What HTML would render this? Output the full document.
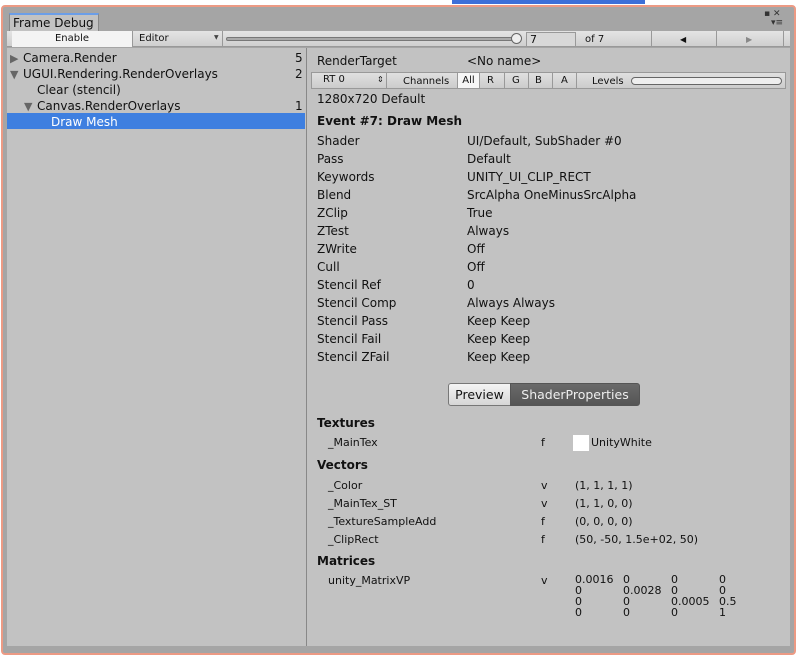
<!DOCTYPE html>
<html><head><style>
*{margin:0;padding:0;box-sizing:border-box}
body{width:797px;height:655px;background:#fff;font-family:"DejaVu Sans",sans-serif;font-size:11px;color:#111;position:relative;overflow:hidden}
.a{position:absolute;white-space:nowrap}
.win{position:absolute;left:1px;top:5px;width:795px;height:650px;border:2px solid #ec9a84;border-radius:4px;background:#a5a5a5}
.b{font-weight:bold}
.tri{color:#666;font-size:11px;display:inline-block;width:13px}
</style></head><body>
<div class="a" style="left:452px;top:0;width:193px;height:4px;background:#3c6fd8"></div>
<div class="win"></div>
<div class="a" style="left:9px;top:13px;width:90px;height:19px;background:#c2c2c2;border-top:2px solid #6b9ee8;border-left:1px solid #888;border-right:1px solid #888;padding:1px 0 0 3px;font-size:12px">Frame Debug</div>
<div class="a" style="left:764px;top:9px;font-size:9px;color:#333">▪ ✕</div>
<div class="a" style="left:771px;top:18px;font-size:9px;color:#333">▾≡</div>
<div class="a" style="left:7px;top:31px;width:783px;height:16px;background:linear-gradient(#e4e4e4,#cfcfcf);border-bottom:1px solid #999"></div>
<div class="a" style="left:12px;top:31px;width:121px;height:16px;background:#f4f4f4;border-right:1px solid #999;text-align:center;font-size:10px;line-height:16px">Enable</div>
<div class="a" style="left:139px;top:31px;font-size:10px;line-height:16px">Editor</div>
<div class="a" style="left:214px;top:31px;font-size:6px;line-height:14px;color:#444">▼</div>
<div class="a" style="left:222px;top:31px;width:1px;height:16px;background:#999"></div>
<div class="a" style="left:226px;top:37px;width:290px;height:4px;background:#aaa;border:1px solid #777;border-radius:2px"></div>
<div class="a" style="left:511px;top:33px;width:11px;height:11px;background:#eee;border:1px solid #666;border-radius:50%"></div>
<div class="a" style="left:526px;top:32px;width:50px;height:15px;background:#d8d8d8;border:1px solid #999;padding-left:3px;font-size:11px;line-height:13px">7</div>
<div class="a" style="left:585px;top:31px;font-size:10px;line-height:17px">of 7</div>
<div class="a" style="left:651px;top:31px;width:1px;height:16px;background:#999"></div>
<div class="a" style="left:716px;top:31px;width:1px;height:16px;background:#999"></div>
<div class="a" style="left:783px;top:31px;width:1px;height:16px;background:#999"></div>
<div class="a" style="left:680px;top:31px;font-size:8px;line-height:17px">◀</div>
<div class="a" style="left:746px;top:31px;font-size:8px;line-height:17px;color:#888">▶</div>
<div class="a" style="left:7px;top:48px;width:299px;height:598px;background:#c2c2c2"></div>
<div class="a" style="left:306px;top:48px;width:1px;height:598px;background:#888"></div>
<div class="a" style="left:307px;top:48px;width:483px;height:598px;background:#c2c2c2"></div>
<div class="a" style="left:7px;top:113px;width:298px;height:16px;background:#3e7fe0"></div>
<div class="a" style="left:10px;top:50px;font-size:12px;line-height:16px"><span class="tri">▶</span>Camera.Render</div>
<div class="a" style="left:10px;top:66px;font-size:12px;line-height:16px"><span class="tri">▼</span>UGUI.Rendering.RenderOverlays</div>
<div class="a" style="left:37px;top:82px;font-size:12px;line-height:16px">Clear (stencil)</div>
<div class="a" style="left:24px;top:98px;font-size:12px;line-height:16px"><span class="tri">▼</span>Canvas.RenderOverlays</div>
<div class="a" style="left:51px;top:114px;font-size:12px;line-height:16px;color:#fff">Draw Mesh</div>
<div class="a" style="left:295px;top:50px;font-size:12px;line-height:16px">5</div>
<div class="a" style="left:295px;top:66px;font-size:12px;line-height:16px">2</div>
<div class="a" style="left:295px;top:98px;font-size:12px;line-height:16px">1</div>
<div class="a" style="left:317px;top:53px;font-size:12px;line-height:16px">RenderTarget</div>
<div class="a" style="left:467px;top:53px;font-size:12px;line-height:16px">&lt;No name&gt;</div>
<div class="a" style="left:311px;top:72px;width:475px;height:17px;background:linear-gradient(#e0e0e0,#cccccc);border:1px solid #999"></div>
<div class="a" style="left:317px;top:72px;width:70px;height:16px;border-right:1px solid #999;font-size:10px;line-height:16px;padding-left:6px">RT 0<span style="position:absolute;left:60px;font-size:8px">⇕</span></div>
<div class="a" style="left:403px;top:74px;font-size:10px;line-height:16px">Channels</div>
<div class="a" style="left:457px;top:72px;width:23px;height:17px;background:#f6f6f6;border:1px solid #999;font-size:10px;line-height:15px;text-align:center">All</div>
<div class="a" style="left:487px;top:72px;font-size:10px;line-height:17px">R</div>
<div class="a" style="left:504px;top:72px;width:1px;height:16px;background:#999"></div>
<div class="a" style="left:512px;top:72px;font-size:10px;line-height:17px">G</div>
<div class="a" style="left:528px;top:72px;width:1px;height:16px;background:#999"></div>
<div class="a" style="left:535px;top:72px;font-size:10px;line-height:17px">B</div>
<div class="a" style="left:552px;top:72px;width:1px;height:16px;background:#999"></div>
<div class="a" style="left:561px;top:72px;font-size:10px;line-height:17px">A</div>
<div class="a" style="left:576px;top:72px;width:1px;height:16px;background:#999"></div>
<div class="a" style="left:592px;top:74px;font-size:10px;line-height:16px">Levels</div>
<div class="a" style="left:631px;top:77px;width:151px;height:8px;background:#eee;border:1px solid #666;border-radius:4px"></div>
<div class="a" style="left:317px;top:91px;font-size:12px;line-height:16px">1280x720 Default</div>
<div class="a b" style="left:317px;top:113px;font-size:12px;line-height:16px">Event #7: Draw Mesh</div>
<div class="a" style="left:317px;top:132px;font-size:12px;line-height:18px">Shader<br>Pass<br>Keywords<br>Blend<br>ZClip<br>ZTest<br>ZWrite<br>Cull<br>Stencil Ref<br>Stencil Comp<br>Stencil Pass<br>Stencil Fail<br>Stencil ZFail</div>
<div class="a" style="left:467px;top:132px;font-size:12px;line-height:18px">UI/Default, SubShader #0<br>Default<br>UNITY_UI_CLIP_RECT<br>SrcAlpha OneMinusSrcAlpha<br>True<br>Always<br>Off<br>Off<br>0<br>Always Always<br>Keep Keep<br>Keep Keep<br>Keep Keep</div>
<div class="a" style="left:448px;top:383px;width:63px;height:23px;background:linear-gradient(#f4f4f4,#d6d6d6);border:1px solid #777;border-radius:3px 0 0 3px;font-size:12.5px;line-height:21px;text-align:center">Preview</div>
<div class="a" style="left:510px;top:383px;width:130px;height:23px;background:linear-gradient(#6a6a6a,#555);border:1px solid #555;border-radius:0 3px 3px 0;font-size:12.5px;line-height:21px;text-align:center;color:#eee">ShaderProperties</div>
<div class="a b" style="left:317px;top:415px;font-size:12px;line-height:16px">Textures</div>
<div class="a" style="left:328px;top:436px;font-size:11px;line-height:14px">_MainTex</div>
<div class="a" style="left:541px;top:436px;font-size:11px;line-height:14px">f</div>
<div class="a" style="left:573px;top:435px;width:16px;height:16px;background:#fff"></div>
<div class="a" style="left:591px;top:436px;font-size:11px;line-height:14px">UnityWhite</div>
<div class="a b" style="left:317px;top:457px;font-size:12px;line-height:16px">Vectors</div>
<div class="a" style="left:328px;top:477px;font-size:11px;line-height:18px">_Color<br>_MainTex_ST<br>_TextureSampleAdd<br>_ClipRect</div>
<div class="a" style="left:541px;top:477px;font-size:11px;line-height:18px">v<br>v<br>f<br>f</div>
<div class="a" style="left:575px;top:477px;font-size:11px;line-height:18px">(1, 1, 1, 1)<br>(1, 1, 0, 0)<br>(0, 0, 0, 0)<br>(50, -50, 1.5e+02, 50)</div>
<div class="a b" style="left:317px;top:553px;font-size:12px;line-height:16px">Matrices</div>
<div class="a" style="left:328px;top:574px;font-size:11px;line-height:14px">unity_MatrixVP</div>
<div class="a" style="left:541px;top:574px;font-size:11px;line-height:14px">v</div>
<div class="a" style="left:575px;top:574px;font-size:11px;line-height:11px">0.0016<br>0<br>0<br>0</div>
<div class="a" style="left:623px;top:574px;font-size:11px;line-height:11px">0<br>0.0028<br>0<br>0</div>
<div class="a" style="left:671px;top:574px;font-size:11px;line-height:11px">0<br>0<br>0.0005<br>0</div>
<div class="a" style="left:719px;top:574px;font-size:11px;line-height:11px">0<br>0<br>0.5<br>1</div>
</body></html>
